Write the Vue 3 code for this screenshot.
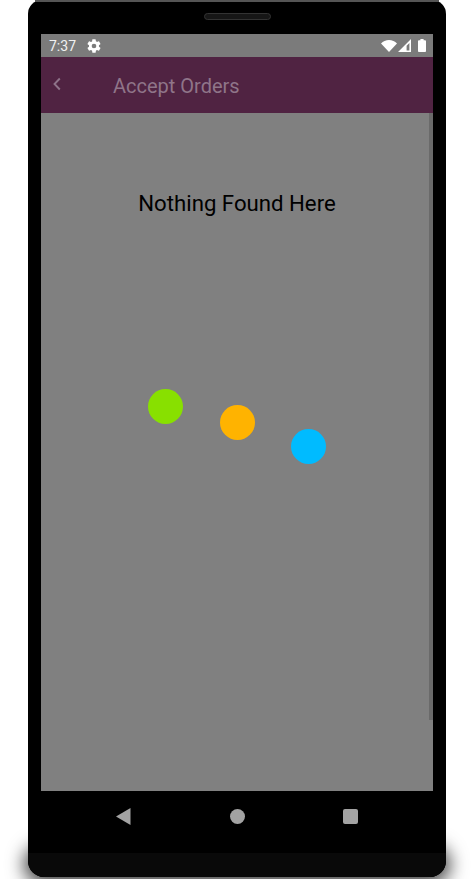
<script setup>
const dots = [
  { cls: 'green' },
  { cls: 'amber' },
  { cls: 'blue' },
]
</script>

<template>
  <div class="page">
    <div class="phone">
      <div class="bezel-top"><div class="speaker"></div></div>
      <div class="screen">
        <div class="status">
          <span class="time">7:37</span>
          <svg class="gear" viewBox="0 0 24 24" width="16" height="16">
            <path fill="#fff" d="M19.4 13c.04-.33.06-.66.06-1s-.02-.67-.06-1l2.1-1.65c.19-.15.24-.42.12-.64l-2-3.46c-.12-.22-.39-.3-.61-.22l-2.49 1c-.52-.4-1.08-.73-1.69-.98l-.38-2.65A.49.49 0 0 0 14 2h-4c-.25 0-.46.18-.49.42l-.38 2.65c-.61.25-1.17.59-1.69.98l-2.49-1c-.23-.09-.49 0-.61.22l-2 3.46c-.13.22-.07.49.12.64L4.56 11c-.04.33-.07.67-.07 1s.03.67.07 1l-2.1 1.65c-.19.15-.25.42-.12.64l2 3.46c.12.22.39.3.61.22l2.49-1c.52.4 1.08.73 1.69.98l.38 2.65c.03.24.24.42.49.42h4c.25 0 .46-.18.49-.42l.38-2.65c.61-.25 1.17-.59 1.69-.98l2.49 1c.23.09.49 0 .61-.22l2-3.46c.12-.22.07-.49-.12-.64L19.4 13zM12 15.5a3.5 3.5 0 1 1 0-7 3.5 3.5 0 0 1 0 7z"/>
          </svg>
          <span class="spacer"></span>
          <svg class="wifi" viewBox="0 0 16 12" width="16" height="12">
            <path fill="#fff" d="M0 3.6C2 1.4 4.9 0 8 0s6 1.4 8 3.6L8 12z"/>
          </svg>
          <svg class="signal" viewBox="0 0 13 13" width="13" height="13">
            <path fill="#fff" d="M13 0v13H0zM11.4 3.9 8.6 6.7v4.7h2.8z" fill-rule="evenodd"/>
          </svg>
          <svg class="battery" viewBox="0 0 8 13" width="8" height="13">
            <path fill="#fff" d="M2.4 0h3.2v1.3h1.5c.5 0 .9.4.9.9v10c0 .5-.4.8-.9.8H.9c-.5 0-.9-.3-.9-.8v-10c0-.5.4-.9.9-.9h1.5z"/>
          </svg>
        </div>
        <header class="appbar">
          <svg class="back" viewBox="0 0 10 14" width="10" height="14">
            <path d="M7.8 1.5 2.500 7l5.300 5.500" fill="none" stroke="#8e7389" stroke-width="1.900"/>
          </svg>
          <span class="title">Accept Orders</span>
        </header>
        <main class="content">
          <p class="empty">Nothing Found Here</p>
          <div class="dots">
            <span v-for="d in dots" :key="d.cls" class="dot" :class="d.cls"></span>
          </div>
          <div class="scrollbar"></div>
        </main>
      </div>
      <nav class="navbar">
        <svg viewBox="0 0 15 17" width="15" height="17"><path fill="#a3a3a3" d="M14.500 0v17L0 8.500z"/></svg>
        <span class="home"></span>
        <span class="recent"></span>
      </nav>
      <div class="chin"></div>
    </div>
  </div>
</template>

<style scoped>
.page {
  position: relative;
  width: 474px;
  height: 882px;
  background: #fff;
  overflow: hidden;
  font-family: Roboto, "Noto Sans", sans-serif;
}
.page::before {
  content: "";
  position: absolute;
  left: 34px;
  right: 34px;
  top: 858px;
  height: 19px;
  border-radius: 12px;
  background: #000;
  box-shadow: 0 -3px 18px 10px rgba(0, 0, 0, 0.75);
  clip-path: inset(-40px -40px -2px -40px);
}
.phone {
  position: relative;
  width: 418px;
  height: 877px;
  margin-left: 28px;
  background: #000;
  border-radius: 14px 14px 16px 16px;
  padding: 0 13px;
  box-sizing: border-box;
  display: flex;
  flex-direction: column;
}
.bezel-top {
  height: 34px;
  display: flex;
  justify-content: center;
  padding-top: 13px;
  box-sizing: border-box;
  border-top: 2px solid #555;
  margin: 0 -6px;
}
.speaker {
  width: 67px;
  height: 7px;
  margin-top: -2px;
  background: #161616;
  border: 1px solid #333;
  border-radius: 4px;
  box-sizing: border-box;
}
.screen {
  height: 757px;
  display: flex;
  flex-direction: column;
  background: #808080;
}
.status {
  height: 23px;
  flex: none;
  display: flex;
  align-items: center;
  padding: 0 7px 0 8px;
  background: #7b7b7b;
  color: #f1f1f1;
}
.time {
  font-size: 14px;
  line-height: 23px;
  position: relative;
  top: 1px;
}
.gear {
  margin-left: 10px;
}
.spacer {
  flex: 1;
}
.signal {
  margin-left: 1px;
}
.battery {
  margin-left: 7px;
}
.appbar {
  height: 56px;
  flex: none;
  display: flex;
  align-items: center;
  background: #502342;
  box-sizing: border-box;
  padding-left: 11px;
}
.back {
  margin-top: -3px;
}
.title {
  margin-left: 51px;
  margin-top: 2px;
  font-size: 20px;
  color: #8f7589;
}
.content {
  position: relative;
  flex: 1;
  background: #808080;
}
.empty {
  margin: 0;
  padding-top: 76px;
  text-align: center;
  font-size: 22.2px;
  line-height: 28px;
  color: #000;
}
.dots {
  margin-top: 172px;
  margin-left: 107px;
  width: 178px;
  display: flex;
  justify-content: space-between;
  align-items: flex-start;
}
.dot {
  width: 35px;
  height: 35px;
  border-radius: 50%;
}
.green {
  background: #88e000;
}
.amber {
  margin-top: 16px;
  background: #ffb300;
}
.blue {
  margin-top: 40px;
  background: #00bbff;
}
.scrollbar {
  position: absolute;
  right: 0;
  top: 0;
  width: 4px;
  height: 607px;
  background: #6a6a6a;
}
.navbar {
  height: 50px;
  flex: none;
  display: flex;
  align-items: center;
  padding: 0 75px;
  justify-content: space-between;
  box-sizing: border-box;
}
.home {
  width: 15px;
  height: 15px;
  border-radius: 50%;
  background: #a3a3a3;
}
.recent {
  width: 15px;
  height: 15px;
  border-radius: 2px;
  background: #a3a3a3;
}
.chin {
  margin: 12px -13px 0;
  flex: 1;
  background: #090909;
  border-radius: 0 0 16px 16px;
}
</style>
